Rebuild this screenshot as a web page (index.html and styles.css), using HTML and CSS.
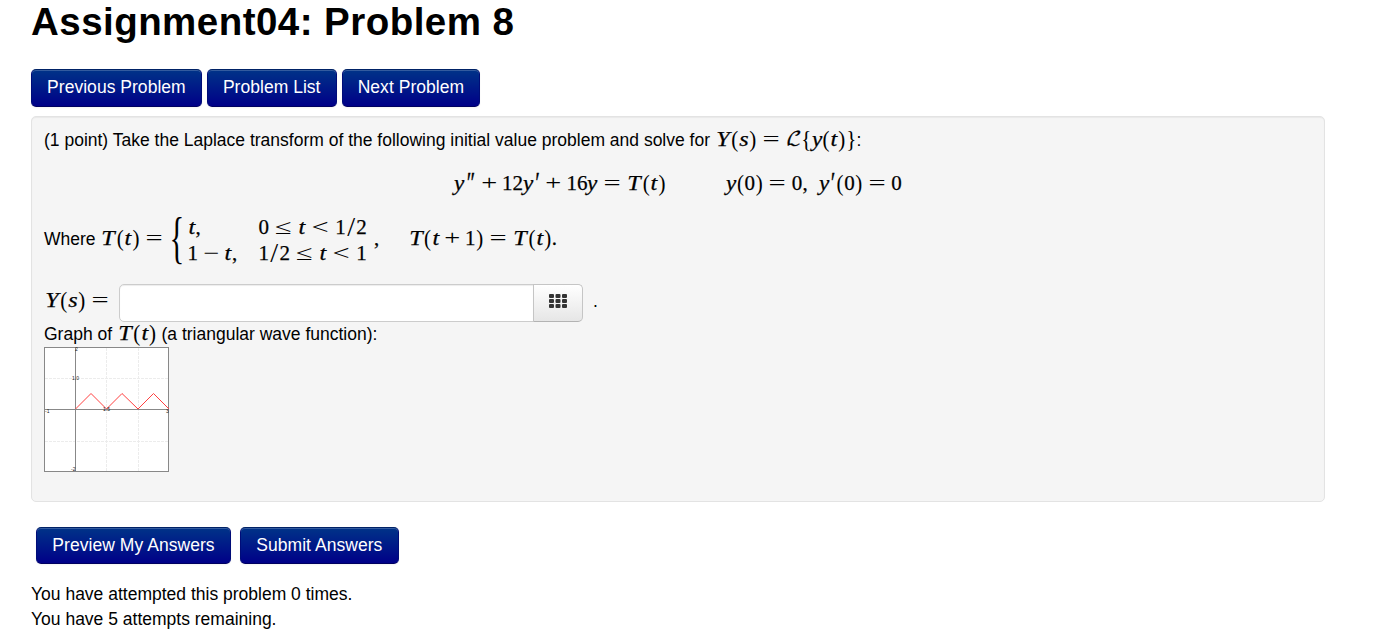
FILE: index.html
```
<!DOCTYPE html>
<html lang="en">

<head>
    <meta charset="UTF-8">
    <meta name="viewport" content="width=device-width, initial-scale=1.0">
    <title>Assignment04: Problem 8</title>
    <link rel="stylesheet" href="styles.css">
</head>

<body>
    <h1>Assignment04: Problem 8</h1>
    <nav>
        <a class="btn" href="#">Previous Problem</a>
        <a class="btn" href="#">Problem List</a>
        <a class="btn" href="#">Next Problem</a>
    </nav>
    <form id="problem">
        <div class="well">
            <p><span class="intro">(1 point) Take the Laplace transform of the following initial value problem and solve for </span><span class="math"><i class="cap">Y</i><b>(</b><i class="s">s</i><b>)</b><b class="rel">=</b><b class="lap">ℒ</b><b class="set">{</b><i class="y">y</i><b>(</b><i class="t">t</i><b>)</b><b class="set">}</b></span>:</p>
            <p class="display"><span class="math"><i class="y">y</i><sup class="two">′′</sup><b class="bin">+</b>12<i class="y">y</i><sup>′</sup><b class="bin">+</b>16<i class="y">y</i><b class="rel">=</b><i class="cap">T</i><b>(</b><i class="t">t</i><b>)</b><span class="qquad"></span><i class="y">y</i><b>(</b>0<b>)</b><b class="rel">=</b>0<b class="comma">,</b><span class="thin"></span><i class="y">y</i><sup>′</sup><b>(</b>0<b>)</b><b class="rel">=</b>0</span></p>
            <p class="where"><span class="text">Where </span><span class="math"><i class="cap">T</i><b>(</b><i class="t">t</i><b>)</b><b class="rel">=</b></span><span class="math cases"><span class="brace">{</span><span class="rows"><span><i class="t">t</i><b class="comma">,</b></span><span>0<b class="rel">≤</b><i class="t">t</i><b class="rel">&lt;</b>1<b class="slash">/</b>2</span><span>1<b class="bin">−</b><i class="t">t</i><b class="comma">,</b></span><span>1<b class="slash">/</b>2<b class="rel">≤</b><i class="t">t</i><b class="rel">&lt;</b>1</span></span></span><span class="math"><b class="comma after">,</b><i class="cap">T</i><b>(</b><i class="t">t</i><b class="bin">+</b>1<b>)</b><b class="rel">=</b><i class="cap">T</i><b>(</b><i class="t">t</i><b>)</b>.</span></p>
            <div class="answer">
                <span class="math"><i class="cap">Y</i><b>(</b><i class="s">s</i><b>)</b><b class="rel">=</b></span>
                <input type="text" aria-label="answer 1">
                <button type="button" class="keypad" aria-label="equation editor">
                    <svg width="18" height="14" viewBox="0 0 18 14" fill="#333">
                        <rect x="0" y="0" width="5" height="4" rx="1" />
                        <rect x="6.500" y="0" width="5" height="4" rx="1" />
                        <rect x="13" y="0" width="5" height="4" rx="1" />
                        <rect x="0" y="5" width="5" height="4" rx="1" />
                        <rect x="6.500" y="5" width="5" height="4" rx="1" />
                        <rect x="13" y="5" width="5" height="4" rx="1" />
                        <rect x="0" y="10" width="5" height="4" rx="1" />
                        <rect x="6.500" y="10" width="5" height="4" rx="1" />
                        <rect x="13" y="10" width="5" height="4" rx="1" />
                    </svg>
                </button>
                <span class="dot">.</span>
            </div>
            <p><span class="graph-of">Graph of </span><span class="math"><i class="cap">T</i><b>(</b><i class="t">t</i><b>)</b></span> (a triangular wave function):</p>
            <svg class="graph" width="125" height="125" viewBox="0 0 125 125">
                <rect x=".5" y=".5" width="124" height="124" fill="#fff" stroke="#888" />
                <path d="M62.500 1v123M94.500 1v123M1 31.500h123M1 94.500h123" stroke="#ececec" stroke-dasharray="3 1" />
                <path d="M31.500 0v125M0 62.500h125" stroke="#888" />
                <path class="wave" d="M31.500 62 47 46.500 62.500 62 78 46.500 94 62 109.500 46.500 125 62" />
                <g class="ticks">
                    <text x="28" y="33">1.0</text>
                    <text x="59" y="64">1.5</text>
                    <text x="1" y="66">-1</text>
                    <text x="122" y="66">3</text>
                    <text x="31" y="4">2</text>
                    <text x="27" y="124">-2</text>
                </g>
            </svg>
        </div>
        <div class="submit">
            <button type="button" class="btn">Preview My Answers</button>
            <button type="button" class="btn">Submit Answers</button>
        </div>
    </form>
    <p>You have attempted this problem 0 times.<br>You have 5 attempts remaining.</p>
</body>

</html>
```
FILE: styles.css
```
* {
    padding: 0;
    margin: 0;
    box-sizing: border-box;
}

body {
    padding: 0 66px 0 31px;
    background: white;
    color: black;
    font-family: "Liberation Sans", Arial, sans-serif;
    font-size: 17.5px;
    line-height: 25px;
    overflow: hidden;
}

h1 {
    font-size: 38.5px;
    line-height: 44px;
    height: 69px;
    letter-spacing: .46px;
}

p {
    white-space: nowrap;
}

nav {
    display: flex;
    gap: 5px;
}

.btn {
    display: block;
    height: 38px;
    padding: 5px 15.3px;
    border: 1px solid #002266;
    border-color: #002266 #000c78 #000060;
    border-radius: 5px;
    background: linear-gradient(#003388, #000088);
    box-shadow: inset 0 1px 0 rgba(255, 255, 255, .2), 0 1px 2px rgba(0, 0, 0, .05);
    color: white;
    font-family: inherit;
    font-size: 17.5px;
    line-height: 25px;
    letter-spacing: .05px;
    text-decoration: none;
    white-space: nowrap;
}

nav .btn {
    padding: 5px 15.1px;
    letter-spacing: .03px;
}

.well {
    height: 386px;
    margin-top: 9px;
    padding: 11px 12px;
    border: 1px solid #e3e3e3;
    border-radius: 5px;
    background: #f5f5f5;
    box-shadow: inset 0 1px 1px rgba(0, 0, 0, .05);
}

/* math */
.math {
    font-family: "Liberation Serif", "Times New Roman", serif;
    font-size: 21px;
    line-height: 0;
    -webkit-text-stroke: .25px black;
}

.math i,
.math b {
    display: inline-block;
    width: .389em;
    font-weight: normal;
    text-align: center;
}

.math b {
    -webkit-text-stroke: 0;
    transform: scaleY(1.1);
}

.math .cap {
    width: .75em;
    transform: scaleX(1.15);
}

.math .s {
    width: .469em;
    transform: scaleX(1.15);
}

.math .y {
    width: .5em;
    transform: scaleX(1.1);
}

.math .t {
    width: .361em;
    transform: scaleX(1.15);
}

.math .rel {
    width: .778em;
    margin: 0 .29em;
    transform: scaleX(1.45);
}

.math .bin {
    width: .778em;
    margin: 0 .23em;
    transform: scaleX(1.35);
}

.math .lap {
    width: .75em;
    font-family: "DejaVu Math TeX Gyre", "DejaVu Serif", serif;
    -webkit-text-stroke: .25px black;
    transform: translateX(1px) skewX(-6deg) scale(.95, .9);
}

.math .set,
.math .slash {
    width: .5em;
}

.math .slash {
    transform: scale(1.35, 1.25);
}

.math .comma {
    width: .278em;
    -webkit-text-stroke: .25px black;
    transform: none;
}

.math sup {
    display: inline-block;
    width: .33em;
    font-size: 21px;
    font-style: italic;
    letter-spacing: -.05em;
    text-indent: -.12em;
    vertical-align: .06em;
    line-height: 0;
    transform: scaleY(1.4);
}

.math .two {
    width: .54em;
}

.qquad {
    display: inline-block;
    width: 2.85em;
}

.thin {
    display: inline-block;
    width: .5em;
}

.display {
    margin: 19px 0 -1px;
    text-align: center;
}

.where {
    height: 52px;
    margin-top: 17px;
    line-height: 52px;
}

.cases {
    display: inline-flex;
    height: 52px;
    vertical-align: middle;
}

.brace {
    width: 19px;
    font-size: 56px;
    line-height: 48px;
    transform: scaleX(.55);
    text-indent: -7px;
    -webkit-text-stroke: 0;
}

.rows {
    display: grid;
    grid-template-columns: auto auto;
    column-gap: 21px;
    line-height: 26px;
}

.rows .rel {
    margin: 0 .31em;
}

.math .after {
    width: 1.95em;
    padding-left: .35em;
    text-align: left;
}

.answer {
    display: flex;
    height: 38px;
    margin-top: 19px;
    line-height: 34px;
}

.answer .math {
    width: 75px;
    line-height: 32px;
    white-space: nowrap;
}

.answer input {
    width: 415px;
    border: 1px solid #ccc;
    border-radius: 5px 0 0 5px;
    background: white;
    box-shadow: inset 0 1px 1px rgba(0, 0, 0, .075);
}

.keypad {
    display: flex;
    justify-content: center;
    width: 50px;
    margin-left: -1px;
    padding-top: 9px;
    border: 1px solid #c5c5c5;
    border-bottom-color: #b3b3b3;
    border-radius: 0 5px 5px 0;
    background: linear-gradient(white, #e6e6e6);
}

.dot {
    margin-left: 10px;
}

.graph {
    display: block;
}

.wave {
    fill: none;
    stroke: #ff4040;
}

.ticks {
    font-size: 5px;
    fill: #222;
}

.submit {
    display: flex;
    gap: 9px;
    padding: 25px 5px 18px;
}

.submit .btn {
    height: 37px;
    padding-top: 4px;
}
```
